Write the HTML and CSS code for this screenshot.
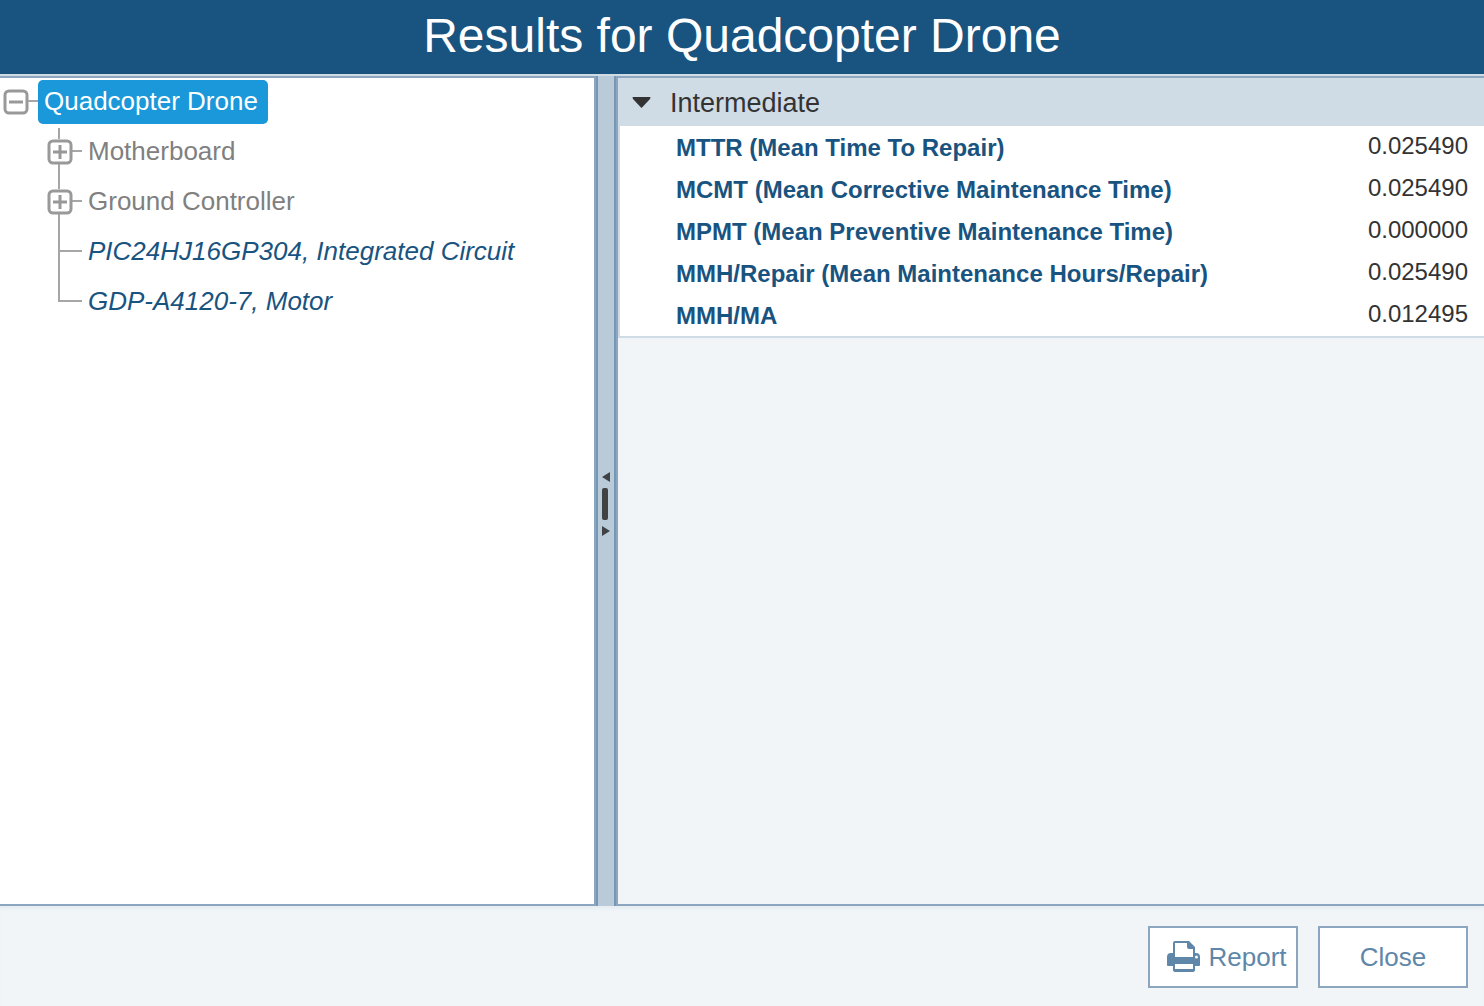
FILE: index.html
```html
<!DOCTYPE html>
<html lang="en">
<head>
<meta charset="utf-8">
<meta name="viewport" content="width=device-width, initial-scale=1">
<title>Results for Quadcopter Drone</title>
<link rel="stylesheet" href="styles.css">
</head>
<body class="dialog">
<header class="dialog-header"><h1 class="dialog-title">Results for Quadcopter Drone</h1></header>
<main class="panes">
  <nav class="tree-pane" aria-label="System tree">
    <div class="tree-row tree-row-root">
      <button class="toggle" type="button" aria-label="Collapse Quadcopter Drone" aria-expanded="true">
        <svg class="branch" width="38" height="48" viewBox="0 0 38 48" aria-hidden="true"><rect x="5" y="13" width="22" height="22" rx="4"/><path class="sign" d="M9 24h14"/><path class="line" d="M28 23h10"/></svg>
      </button>
      <a class="node node-selected" href="#drone">Quadcopter Drone</a>
    </div>
    <ul class="tree-children">
      <li class="tree-row">
        <button class="toggle" type="button" aria-label="Expand Motherboard" aria-expanded="false">
          <svg class="branch" width="38" height="50" viewBox="0 0 38 50" aria-hidden="true"><path class="line" d="M15 2v11M15 38v12M28 25h10"/><rect x="5" y="15" width="22" height="22" rx="4"/><path class="sign" d="M9 26h14M16 19v14"/></svg>
        </button>
        <a class="node" href="#motherboard">Motherboard</a>
      </li>
      <li class="tree-row">
        <button class="toggle" type="button" aria-label="Expand Ground Controller" aria-expanded="false">
          <svg class="branch" width="38" height="50" viewBox="0 0 38 50" aria-hidden="true"><path class="line" d="M15 0v13M15 38v12M28 25h10"/><rect x="5" y="15" width="22" height="22" rx="4"/><path class="sign" d="M9 26h14M16 19v14"/></svg>
        </button>
        <a class="node" href="#controller">Ground Controller</a>
      </li>
      <li class="tree-row">
        <svg class="branch" width="38" height="50" viewBox="0 0 38 50" aria-hidden="true"><path class="line" d="M15 0v50M15 25h23"/></svg>
        <a class="node node-part" href="#pic">PIC24HJ16GP304, Integrated Circuit</a>
      </li>
      <li class="tree-row">
        <svg class="branch" width="38" height="50" viewBox="0 0 38 50" aria-hidden="true"><path class="line" d="M15 0v25h23"/></svg>
        <a class="node node-part" href="#motor">GDP-A4120-7, Motor</a>
      </li>
    </ul>
  </nav>
  <div class="splitter" role="separator" aria-orientation="vertical">
    <svg width="8" height="66" viewBox="0 0 8 66" aria-hidden="true"><path d="M8 1v10L0 6zM0 55v10l8-5z"/><rect x="0" y="17" width="6" height="32" rx="2"/></svg>
  </div>
  <section class="results-pane">
    <div class="group">
      <button class="group-header" type="button" aria-expanded="true">
        <svg width="20" height="12" viewBox="0 0 20 12" aria-hidden="true"><path d="M1 0h17q1 0 0 2l-8 8.500q-0.500 0.500-1 0L1 2q-1-2 0-2z"/></svg>
        Intermediate
      </button>
      <table class="metrics">
        <tbody>
          <tr><th scope="row">MTTR (Mean Time To Repair)</th><td>0.025490</td></tr>
          <tr><th scope="row">MCMT (Mean Corrective Maintenance Time)</th><td>0.025490</td></tr>
          <tr><th scope="row">MPMT (Mean Preventive Maintenance Time)</th><td>0.000000</td></tr>
          <tr><th scope="row">MMH/Repair (Mean Maintenance Hours/Repair)</th><td>0.025490</td></tr>
          <tr><th scope="row">MMH/MA</th><td>0.012495</td></tr>
        </tbody>
      </table>
    </div>
  </section>
</main>
<footer class="dialog-footer">
  <button class="action action-report" type="button">
    <svg width="34" height="32" viewBox="0 0 34 32" aria-hidden="true"><path fill-rule="evenodd" d="M8 0h14l6 6v6h1q4 0 4 4v8q0 1-1 1h-4v4q0 2-2 2H8q-2 0-2-2v-4H1q-1 0-1-1v-8q0-4 4-4h2V2q0-2 2-2zM8 2v14h18V8h-4q-2 0-2-2V2zM8 23v5h18v-5zM29.500 14.500a1.500 1.500 0 1 0 0 3 1.500 1.500 0 0 0 0-3z"/></svg>
    Report
  </button>
  <button class="action" type="button">Close</button>
</footer>
</body>
</html>
```
FILE: styles.css
```css
* { box-sizing: border-box; }

.dialog {
  display: flex;
  flex-direction: column;
  min-height: 100vh;
  margin: 0;
  background: #f1f5f8;
  color: #333;
  font-family: "Liberation Sans", Arial, sans-serif;
  font-size: 26px;
}

button {
  margin: 0;
  padding: 0;
  border: 0;
  background: none;
  color: inherit;
  font: inherit;
  cursor: pointer;
}

.dialog-header {
  padding: 8px 20px 10px;
  border-bottom: 2px solid #cfdbe5;
  background: #19537f;
  color: #fff;
  text-align: center;
}

.dialog-title {
  margin: 0;
  font-size: 48px;
  font-weight: 400;
  line-height: 56px;
}

.panes {
  display: flex;
  flex: 1;
}

.tree-pane {
  flex: 2 1 0;
  border: solid #8ba6be;
  border-width: 2px 2px 2px 0;
  background: #fff;
}

.tree-row {
  display: flex;
  align-items: center;
  gap: 6px;
  height: 50px;
}

.tree-row-root {
  gap: 0;
  height: 48px;
}

.tree-children {
  margin: 0;
  padding: 0 0 0 44px;
  list-style: none;
}

.toggle { display: flex; }

.branch {
  flex: none;
  fill: none;
  stroke: #999;
  stroke-width: 3;
}

.branch .line {
  stroke: #a6a6a6;
  stroke-width: 2;
}

.node {
  color: #808080;
  line-height: 44px;
  text-decoration: none;
  white-space: nowrap;
}

.node-selected {
  padding: 0 10px 0 6px;
  border-radius: 5px;
  background: #1a98d9;
  color: #fff;
  line-height: 42px;
  padding-bottom: 2px;
}

.node-part {
  color: #19537f;
  font-style: italic;
}

.splitter {
  display: flex;
  flex: none;
  align-items: center;
  justify-content: center;
  width: 20px;
  padding-top: 25px;
  border: solid #7598b7;
  border-width: 0 2px;
  background: #b9cad9;
  fill: #404244;
  cursor: col-resize;
}

.results-pane {
  flex: 3 1 0;
  max-width: calc(100% - 616px);
  border: solid #8ba6be;
  border-width: 2px 0 2px 2px;
}

.group {
  border: solid #cfdbe5;
  border-width: 0 0 2px 2px;
  background: #fff;
}

.group-header {
  display: flex;
  align-items: center;
  gap: 18px;
  width: 100%;
  height: 48px;
  padding: 4px 12px 2px;
  background: #cfdbe5;
  font-size: 27px;
  fill: #333;
}

.metrics {
  width: 100%;
  border-collapse: collapse;
  font-size: 24px;
  line-height: 40px;
}

.metrics th {
  padding: 2px 0 0 56px;
  color: #19537f;
  font-weight: 700;
  text-align: left;
}

.metrics td {
  padding: 0 16px 2px 0;
  text-align: right;
}

.dialog-footer {
  display: flex;
  justify-content: flex-end;
  gap: 20px;
  padding: 20px 16px 18px;
  box-shadow: inset 0 4px 4px -2px #e3eaf0;
}

.action {
  display: flex;
  align-items: center;
  justify-content: center;
  gap: 8px;
  width: 150px;
  height: 62px;
  border: 2px solid #8ba6be;
  background: #fff;
  color: #5e87a9;
}

.action-report {
  gap: 7px;
  padding-left: 8px;
  fill: #5e87a9;
}
```
